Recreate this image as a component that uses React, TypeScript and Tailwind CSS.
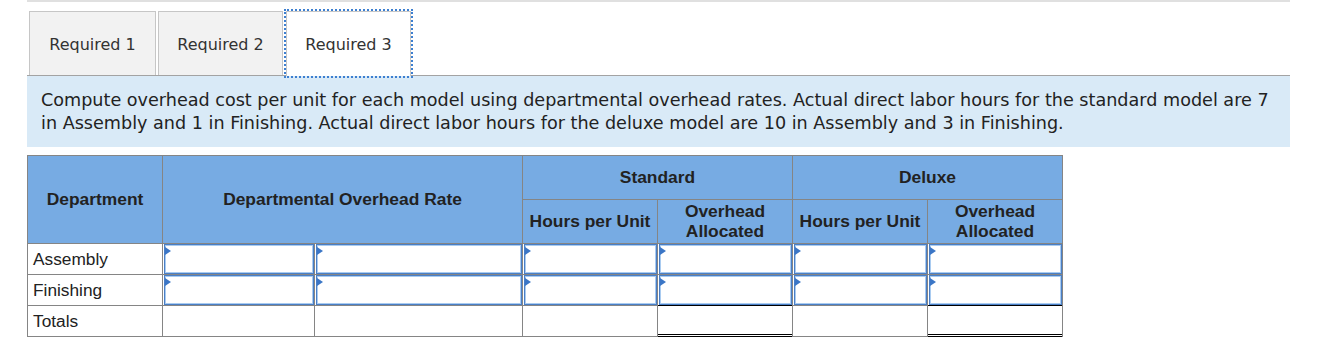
import React from "react";

const verdana = "font-[family-name:'DejaVu_Sans',Verdana,sans-serif]";
const arial = "font-[family-name:'Liberation_Sans',Arial,sans-serif]";

function Flag() {
  return (
    <svg
      className="absolute left-[2px] top-[3px]"
      width="6"
      height="8"
      viewBox="0 0 6 8"
    >
      <polygon points="0,0 6,4 0,8" fill="#3b76c6" />
    </svg>
  );
}

function InputCell() {
  return (
    <div className="relative bg-white pl-px">
      <input
        type="text"
        aria-label="answer"
        className="block h-full w-full border border-[#4a7fc6] bg-white shadow-[inset_0_0_0_1px_#a9cbf0] outline-none"
      />
      <Flag />
    </div>
  );
}

function TotalCell() {
  return <div className="bg-white" />;
}

function TotalAllocatedCell() {
  return (
    <div className="-mt-px -mb-px flex flex-col border-t border-black bg-white">
      <div className="flex-1" />
      <div className="h-px bg-black" />
      <div className="h-px bg-white" />
      <div className="h-px bg-black" />
    </div>
  );
}

const head =
  "flex items-center justify-center bg-[#77abe3] pb-[2px] text-center font-bold text-[17.4px] leading-[20px] text-[#222]";

export default function App() {
  return (
    <div className="min-h-[343px] bg-white">
      <div className="ml-[27px] w-[1263px]">
        <div className="h-[2px] bg-[#e0e0e0]" />

        {/* tab strip */}
        <div className={`mt-[9px] flex items-end pl-[2px] ${verdana} text-[16px] text-[#333]`}>
          <div className="flex h-[64px] w-[127px] items-center justify-center border border-b-0 border-[#c6c6c6] bg-[#f2f2f2] pt-[2px]">
            Required 1
          </div>
          <div className="ml-[2px] flex h-[64px] w-[125px] items-center justify-center border border-b-0 border-[#c6c6c6] bg-[#f2f2f2] pt-[2px]">
            Required 2
          </div>
          <div className="relative z-10 ml-[3px] -mb-px flex h-[65px] w-[125px] items-center justify-center border border-b-0 border-[#c6c6c6] bg-white pt-[2px] outline-2 outline-dotted outline-[#3d7fd0]">
            Required 3
          </div>
        </div>

        {/* instructions */}
        <div
          className={`border-t border-[#a3a3a3] bg-[#d9eaf7] pl-[14px] pr-[8px] pt-[13px] pb-[12px] ${verdana} text-[17.6px] leading-[23px] text-[#222]`}
        >
          Compute overhead cost per unit for each model using departmental overhead rates. Actual direct labor hours for the standard model are 7
          <br />
          in Assembly and 1 in Finishing. Actual direct labor hours for the deluxe model are 10 in Assembly and 3 in Finishing.
        </div>

        {/* worksheet */}
        <div
          className={`mt-[8px] grid w-[1036px] grid-cols-[134px_151px_207px_134px_134px_134px_134px] grid-rows-[43px_43px_30px_30px_30px] gap-px border border-[#858585] bg-[#858585] ${arial}`}
        >
          <div className={`${head} row-span-2`}>Department</div>
          <div className={`${head} col-span-2 row-span-2`}>Departmental Overhead Rate</div>
          <div className={`${head} col-span-2`}>Standard</div>
          <div className={`${head} col-span-2`}>Deluxe</div>

          <div className={head}>Hours per Unit</div>
          <div className={head}>
            Overhead
            <br />
            Allocated
          </div>
          <div className={head}>Hours per Unit</div>
          <div className={head}>
            Overhead
            <br />
            Allocated
          </div>

          {["Assembly", "Finishing"].map((dept) => (
            <React.Fragment key={dept}>
              <div className="flex items-center bg-white pl-[5px] pt-px text-[17.3px] text-[#222]">
                {dept}
              </div>
              <InputCell />
              <InputCell />
              <InputCell />
              <InputCell />
              <InputCell />
              <InputCell />
            </React.Fragment>
          ))}

          <div className="flex items-center bg-white pl-[5px] pt-px text-[17.3px] text-[#222]">
            Totals
          </div>
          <TotalCell />
          <TotalCell />
          <TotalCell />
          <TotalAllocatedCell />
          <TotalCell />
          <TotalAllocatedCell />
        </div>
      </div>
    </div>
  );
}
